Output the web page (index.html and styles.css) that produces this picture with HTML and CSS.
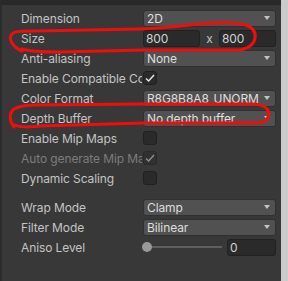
FILE: index.html
```html
<!DOCTYPE html>
<html lang="en">
<head>
    <title>Render Texture</title>
    <link rel="stylesheet" href="styles.css">
</head>
<body>
    <div class="window">
        <!-- Inspector panel -->
        <div class="panel">
            <div class="props">
                <div class="row">
                    <span class="label">Dimension</span>
                    <div class="popup"><span>2D</span><i class="arrow"></i></div>
                </div>
                <div class="row">
                    <span class="label">Size</span>
                    <div class="vector">
                        <div class="num">800</div>
                        <span class="axis">x</span>
                        <div class="num">800</div>
                    </div>
                </div>
                <div class="row">
                    <span class="label">Anti-aliasing</span>
                    <div class="popup"><span>None</span><i class="arrow"></i></div>
                </div>
                <div class="row">
                    <span class="label">Enable Compatible Color Format</span>
                    <div class="toggle checked">
                        <svg width="12" height="12" viewBox="0 0 12 12"><path d="M2 6.5 L4.6 9 L10 3" /></svg>
                    </div>
                </div>
                <div class="row">
                    <span class="label">Color Format</span>
                    <div class="popup"><span>R8G8B8A8_UNORM</span><i class="arrow"></i></div>
                </div>
                <div class="row">
                    <span class="label">Depth Buffer</span>
                    <div class="popup"><span>No depth buffer</span><i class="arrow"></i></div>
                </div>
                <div class="row">
                    <span class="label">Enable Mip Maps</span>
                    <div class="toggle"></div>
                </div>
                <div class="row disabled">
                    <span class="label">Auto generate Mip Maps</span>
                    <div class="toggle checked">
                        <svg width="12" height="12" viewBox="0 0 12 12"><path d="M2 6.5 L4.6 9 L10 3" /></svg>
                    </div>
                </div>
                <div class="row">
                    <span class="label">Dynamic Scaling</span>
                    <div class="toggle"></div>
                </div>

                <div class="spacer"></div>

                <div class="row">
                    <span class="label">Wrap Mode</span>
                    <div class="popup"><span>Clamp</span><i class="arrow"></i></div>
                </div>
                <div class="row">
                    <span class="label">Filter Mode</span>
                    <div class="popup"><span>Bilinear</span><i class="arrow"></i></div>
                </div>
                <div class="row">
                    <span class="label">Aniso Level</span>
                    <div class="slider">
                        <div class="track"></div>
                        <div class="thumb"></div>
                    </div>
                    <div class="num small">0</div>
                </div>
            </div>
        </div>

        <!-- Page behind the editor -->
        <div class="edge"></div>

        <!-- Hand-drawn red marks -->
        <svg class="marks" width="288" height="281" viewBox="0 0 288 281">
            <path d="M22 51 C12 47 8 38 12 34 C15 31 22 31 34 31 L140 29 C170 28 186 25 200 24 C220 22 238 23 246 25 C253 28 256 33 255 38 C254 44 250 48 240 50 L144 50 L60 52 C40 52 28 51 22 49" />
            <path d="M14 127 C9 121 9 113 14 109 C19 106 26 105 36 105 L144 104 L250 104 C262 104 268 108 269 113 C269 118 266 122 258 123 L144 123 L40 126 C30 127 20 128 12 124" />
        </svg>
    </div>
</body>
</html>
```

FILE: styles.css
```css
/* Global Styles */
* {
    margin: 0;
    padding: 0;
    box-sizing: border-box;
}

body {
    width: 288px;
    height: 281px;
    overflow: hidden;
    background-color: #383838;
    font-family: Inter, "Noto Sans", sans-serif;
    font-size: 12px;
    letter-spacing: -0.1px;
    color: #c4c4c4;
}

.window {
    position: relative;
    display: flex;
    height: 281px;
}

/* Inspector panel */
.panel {
    flex: 1;
    background-color: #383838;
    border-left: 2px solid #2c2c2c;
    border-top: 5px solid #292929;
}

.props {
    padding: 3px 0 0 19px;
}

.row {
    display: flex;
    align-items: center;
    height: 20px;
    padding-right: 5px;
}

.label {
    flex: none;
    width: 121px;
    margin-right: 1px;
    overflow: hidden;
    white-space: nowrap;
}

.row.disabled .label {
    color: #7c7c7c;
}

.spacer {
    height: 9px;
}

/* Popups */
.popup {
    flex: 1;
    height: 17px;
    display: flex;
    align-items: center;
    justify-content: space-between;
    padding: 0 5px 0 3px;
    background-color: #515151;
    border: 1px solid #303030;
    border-radius: 3px;
    color: #dedede;
    white-space: nowrap;
}

.arrow {
    width: 0;
    height: 0;
    border-left: 3.5px solid transparent;
    border-right: 3.5px solid transparent;
    border-top: 4px solid #c4c4c4;
}

/* Number fields */
.vector {
    flex: 1;
    display: flex;
    align-items: center;
}

.num {
    flex: 1;
    height: 17px;
    display: flex;
    align-items: center;
    padding-left: 2px;
    background-color: #2a2a2a;
    border: 1px solid #212121;
    border-radius: 3px;
    color: #d2d2d2;
}

.num.small {
    flex: none;
    width: 49px;
}

.axis {
    width: 19px;
    text-align: center;
}

/* Toggles */
.toggle {
    width: 14px;
    height: 14px;
    display: flex;
    align-items: center;
    justify-content: center;
    background-color: #2a2a2a;
    border: 1px solid #202020;
    border-radius: 3px;
}

.toggle path {
    fill: none;
    stroke: #e4e4e4;
    stroke-width: 1.5;
}

.row.disabled .toggle {
    background-color: #313131;
    border-color: #292929;
}

.row.disabled .toggle path {
    stroke: #8c8c8c;
}

/* Slider */
.slider {
    flex: 1;
    position: relative;
    height: 17px;
    display: flex;
    align-items: center;
    margin-right: 5px;
}

.track {
    flex: 1;
    height: 2px;
    background-color: #5e5e5e;
}

.thumb {
    position: absolute;
    left: -1.5px;
    top: 3.5px;
    width: 10px;
    height: 10px;
    border-radius: 50%;
    background-color: #999999;
}

/* Background page at the right */
.edge {
    width: 7px;
    background-color: #cbcbcb;
}

.marks {
    position: absolute;
    left: 0;
    top: 0;
    pointer-events: none;
}

.marks path {
    fill: none;
    stroke: #f20d0d;
    stroke-width: 3;
    stroke-linecap: round;
    stroke-linejoin: round;
}
```
